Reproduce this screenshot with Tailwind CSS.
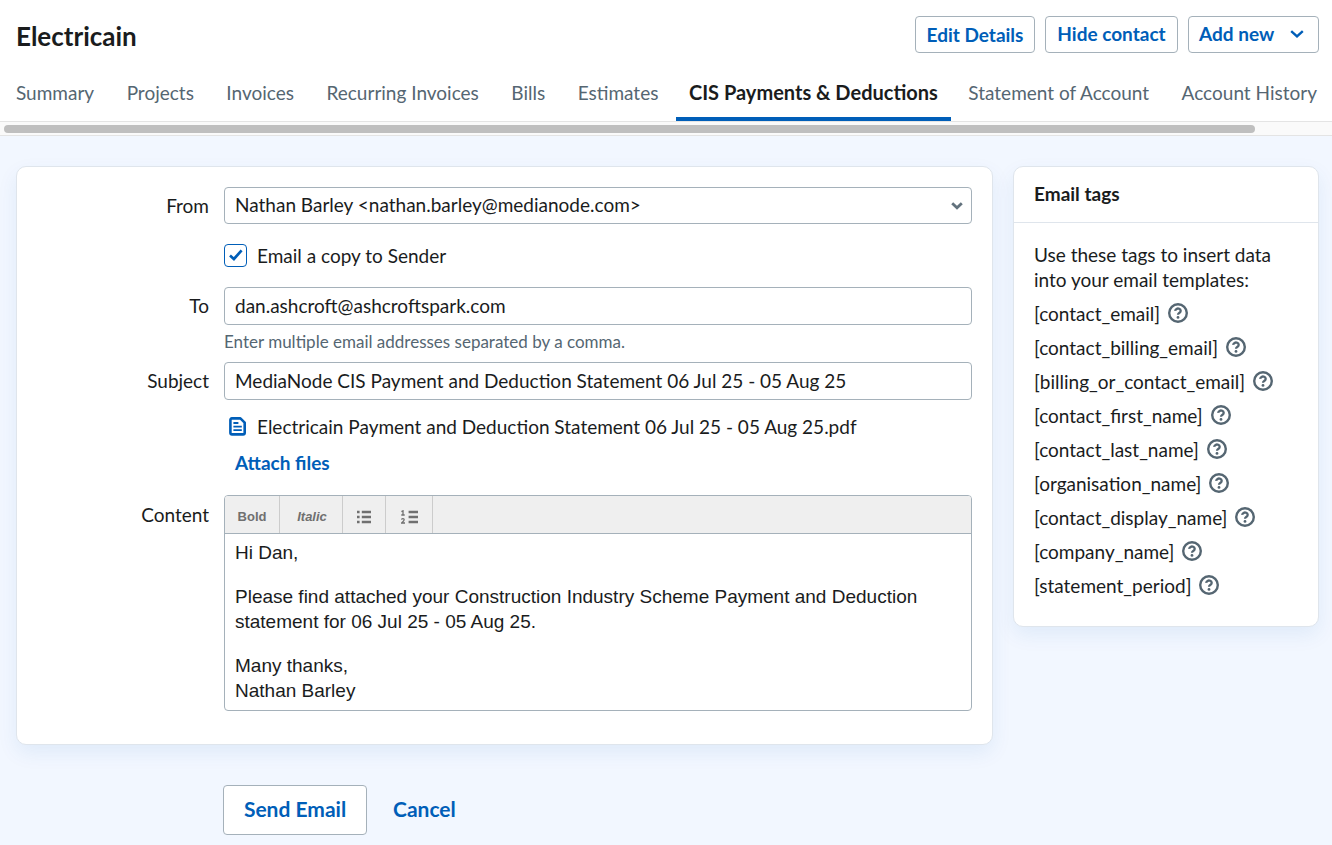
<!DOCTYPE html>
<html lang="en">
<head>
<meta charset="utf-8">
<meta name="viewport" content="width=device-width, initial-scale=1">
<title>Electricain</title>
<script src="https://cdn.jsdelivr.net/npm/@tailwindcss/browser@4"></script>
</head>
<body class="min-h-screen bg-[#f2f7ff] font-['Lato',sans-serif] text-[19px] leading-[25px] text-[#1a1c1d]">
<svg class="hidden" aria-hidden="true">
  <symbol id="help" viewBox="0 0 20 20">
    <circle cx="10" cy="10" r="8.8" fill="none" stroke="#556672" stroke-width="2.4"/>
    <path d="M7.3 7.9a2.7 2.3 0 1 1 4.300 1.800c-.9.6-1.6 1-1.6 2.100" fill="none" stroke="#556672" stroke-width="2.3"/>
    <circle cx="10" cy="14.4" r="1.4" fill="#556672"/>
  </symbol>
</svg>

<header class="bg-white">
  <div class="flex items-start justify-between pt-4 pr-[13px] pl-4">
    <h1 class="pt-1 text-[26px] leading-8 font-bold">Electricain</h1>
    <div class="flex gap-[10px] font-bold text-[#005eb8]">
      <button type="button" class="h-[37px] w-[120px] rounded border border-[#a5b1ba] bg-white">Edit Details</button>
      <button type="button" class="h-[37px] w-[133px] rounded border border-[#a5b1ba] bg-white pb-0.5">Hide contact</button>
      <button type="button" class="flex h-[37px] w-[131px] items-center justify-between rounded border border-[#a5b1ba] bg-white pr-[14px] pb-0.5 pl-[10px]">Add new
        <svg class="h-2 w-[14px]" viewBox="0 0 14 8" fill="none" stroke="currentColor" stroke-width="2.4" aria-hidden="true"><path d="M1.2 1.2 7 6.4l5.8-5.2"/></svg>
      </button>
    </div>
  </div>
  <nav class="mt-[13px] flex h-[55px] justify-between pl-px whitespace-nowrap text-[#556672]">
    <a href="#" class="px-[15px] pt-[14px]">Summary</a>
    <a href="#" class="px-[15px] pt-[14px]">Projects</a>
    <a href="#" class="px-[15px] pt-[14px]">Invoices</a>
    <a href="#" class="px-[15px] pt-[14px]">Recurring Invoices</a>
    <a href="#" class="px-[15px] pt-[14px]">Bills</a>
    <a href="#" class="px-[15px] pt-[14px]">Estimates</a>
    <a href="#" aria-current="page" class="border-b-4 border-[#005eb8] px-[13px] pt-[14px] text-xl leading-[25px] font-bold text-[#1a1c1d]">CIS Payments &amp; Deductions</a>
    <a href="#" class="px-[15px] pt-[14px]">Statement of Account</a>
    <a href="#" class="px-[15px] pt-[14px]">Account History</a>
  </nav>
  <div class="border-y border-[#e4e4e4] bg-[#fafafa] px-1 pt-[3px] pb-0.5">
    <div class="h-2 w-[94.5%] rounded-full bg-[#bfbfbf]"></div>
  </div>
</header>

<main class="flex items-start gap-5 pt-[30px] pr-[13px] pb-[10px] pl-4">
  <form class="min-w-0 flex-1">
    <div class="grid grid-cols-[192px_minmax(0,1fr)] gap-x-[15px] rounded-[10px] border border-[#dfe5ec] bg-white pt-5 pr-5 pb-[33px] shadow-[0_8px_20px_rgba(0,94,184,0.08)]">
      <label for="from" class="pt-[6px] text-right">From</label>
      <div class="relative">
        <select id="from" class="h-[37px] w-full appearance-none rounded border border-[#a5b1ba] bg-white px-[10px] pb-0.5">
          <option>Nathan Barley &lt;nathan.barley@medianode.com&gt;</option>
        </select>
        <svg class="pointer-events-none absolute top-[15px] right-[9px] h-2 w-3" viewBox="0 0 12 8" fill="none" stroke="#62727d" stroke-width="2.8" aria-hidden="true"><path d="M1.2 1.2 6 5.8l4.8-4.6"/></svg>
      </div>

      <label class="col-start-2 mt-5 flex h-[23px] items-center gap-[10px]">
        <span class="relative size-[23px]">
          <input type="checkbox" checked class="peer block size-[23px] appearance-none rounded border border-[#005eb8] bg-white">
          <svg class="pointer-events-none absolute top-[5px] left-[5px] hidden h-3 w-[14px] peer-checked:block" viewBox="0 0 14 12" fill="none" stroke="#005eb8" stroke-width="2.7" aria-hidden="true"><path d="M1 6.6 4.9 10 12.6 1.4"/></svg>
        </span>
        Email a copy to Sender
      </label>

      <label for="to" class="mt-5 pt-[6px] text-right">To</label>
      <div class="mt-5">
        <input id="to" type="text" value="dan.ashcroft@ashcroftspark.com" aria-describedby="to-help" class="block h-[38px] w-full rounded border border-[#a5b1ba] bg-white px-[10px] pb-0.5">
        <p id="to-help" class="mt-[6px] text-[17px] leading-[22px] text-[#556672]">Enter multiple email addresses separated by a comma.</p>
      </div>

      <label for="subject" class="mt-[9px] pt-[6px] text-right">Subject</label>
      <div class="mt-[9px]">
        <input id="subject" type="text" value="MediaNode CIS Payment and Deduction Statement 06 Jul 25 - 05 Aug 25" class="block h-[38px] w-full rounded border border-[#a5b1ba] bg-white px-[10px] pb-0.5">
        <div class="mt-[14px] flex items-center gap-[10px] pl-[5px]">
          <svg class="h-[19px] w-[18px] shrink-0" viewBox="0 0 18 19" fill="none" stroke="#005eb8" stroke-linejoin="round" aria-hidden="true"><path stroke-width="2.6" d="M2.9 1.4h8.500L15.700 5.600v10.200q0 1.600-1.600 1.600H3q-1.600 0-1.600-1.600V3q0-1.600 1.500-1.600z"/><path stroke-width="1.8" d="M4.400 6h5M4.400 9.600h8.400M4.400 13.200h8.400"/></svg>
          <span>Electricain Payment and Deduction Statement 06 Jul 25 - 05 Aug 25.pdf</span>
        </div>
        <button type="button" class="mt-[11px] block pl-[11px] font-bold text-[#005eb8]">Attach files</button>
      </div>

      <div id="content-label" class="mt-5 pt-[7px] text-right">Content</div>
      <div class="mt-5 overflow-hidden rounded border border-[#a5b1ba] bg-white font-['Liberation_Sans',Arial,sans-serif]">
        <div class="flex h-[38px] border-b border-[#a5b1ba] bg-[#efefef] text-[13px] font-bold text-[#707070]">
          <button type="button" class="w-[55px] border-r border-[#ccc] pt-1">Bold</button>
          <button type="button" class="w-[63px] border-r border-[#ccc] pt-1 pl-[2px] italic">Italic</button>
          <button type="button" aria-label="Bulleted list" class="flex w-[43px] items-center justify-center border-r border-[#ccc] pt-1">
            <svg class="h-[14px] w-[14px]" viewBox="0 0 14 14" stroke="#707070" stroke-width="2.4" aria-hidden="true"><path d="M0 2h2.6M0 7h2.6M0 12h2.6M4.8 2H14M4.8 7H14M4.8 12H14"/></svg>
          </button>
          <button type="button" aria-label="Numbered list" class="flex w-[47px] items-center justify-center border-r border-[#ccc] pt-1">
            <svg class="h-[14px] w-[17px]" viewBox="0 0 17 14" stroke="#707070" fill="none" aria-hidden="true"><path stroke-width="2.4" d="M7.6 2H17M7.6 7H17M7.6 12H17"/><path stroke-width="1.3" d="M.4 1.6 2 .8V5M.3 5h3.4M.4 9.6Q.8 8.6 2 8.6t1.2 1.2Q3.200 10.500.6 13H4"/></svg>
          </button>
        </div>
        <div contenteditable="true" role="textbox" aria-multiline="true" aria-labelledby="content-label" class="px-[10px] pt-[6px] pb-[7px] leading-[25px]">
          <p class="mb-[19px]">Hi Dan,</p>
          <p class="mb-[19px]">Please find attached your Construction Industry Scheme Payment and Deduction statement for 06 Jul 25 - 05 Aug 25.</p>
          <p>Many thanks,<br>Nathan Barley</p>
        </div>
      </div>
    </div>

    <div class="mt-10 flex items-center gap-[26px] pl-[207px] text-[21px] font-bold text-[#005eb8]">
      <button type="submit" class="h-[50px] w-36 rounded border border-[#a5b1ba] bg-white pb-[3px]">Send Email</button>
      <a href="#" class="pb-[3px]">Cancel</a>
    </div>
  </form>

  <aside class="w-[306px] shrink-0 rounded-[10px] border border-[#dfe5ec] bg-white shadow-[0_8px_20px_rgba(0,94,184,0.08)]">
    <h2 class="border-b border-[#dfe5ec] px-5 pt-[14px] pb-[16px] font-bold">Email tags</h2>
    <div class="px-5 pt-[19px] pb-[28px]">
      <p>Use these tags to insert data into your email templates:</p>
      <ul class="mt-[9px] flex flex-col gap-[9px]">
        <li class="flex gap-2">[contact_email] <svg class="mt-0.5 size-5" role="img" aria-label="Help"><use href="#help"/></svg></li>
        <li class="flex gap-2">[contact_billing_email] <svg class="mt-0.5 size-5" role="img" aria-label="Help"><use href="#help"/></svg></li>
        <li class="flex gap-2">[billing_or_contact_email] <svg class="mt-0.5 size-5" role="img" aria-label="Help"><use href="#help"/></svg></li>
        <li class="flex gap-2">[contact_first_name] <svg class="mt-0.5 size-5" role="img" aria-label="Help"><use href="#help"/></svg></li>
        <li class="flex gap-2">[contact_last_name] <svg class="mt-0.5 size-5" role="img" aria-label="Help"><use href="#help"/></svg></li>
        <li class="flex gap-2">[organisation_name] <svg class="mt-0.5 size-5" role="img" aria-label="Help"><use href="#help"/></svg></li>
        <li class="flex gap-2">[contact_display_name] <svg class="mt-0.5 size-5" role="img" aria-label="Help"><use href="#help"/></svg></li>
        <li class="flex gap-2">[company_name] <svg class="mt-0.5 size-5" role="img" aria-label="Help"><use href="#help"/></svg></li>
        <li class="flex gap-2">[statement_period] <svg class="mt-0.5 size-5" role="img" aria-label="Help"><use href="#help"/></svg></li>
      </ul>
    </div>
  </aside>
</main>
</body>
</html>
